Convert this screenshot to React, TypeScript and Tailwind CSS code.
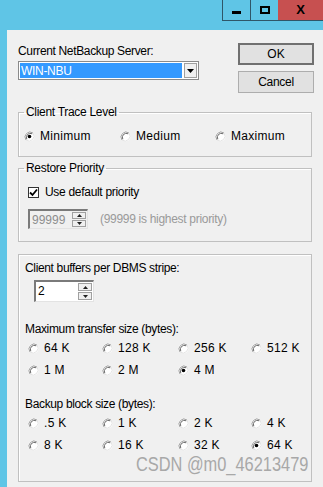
const font = { fontFamily: '"Liberation Sans", Arial, sans-serif' };

function Radio({ checked = false }: { checked?: boolean }) {
  return (
    <svg width="11" height="11" viewBox="0 0 11 11" className="shrink-0">
      <circle cx="5.5" cy="5.5" r="5" fill="#ffffff" />
      <path d="M9 2 A5 5 0 0 0 2 9" fill="none" stroke="#a0a0a0" strokeWidth="1" />
      <path d="M8.2 2.8 A4 4 0 0 0 2.8 8.2" fill="none" stroke="#696969" strokeWidth="1" />
      <path d="M2 9 A5 5 0 0 0 9 2" fill="none" stroke="#e3e3e3" strokeWidth="1" />
      {checked && <circle cx="5.5" cy="5.5" r="1.8" fill="#000000" />}
    </svg>
  );
}

function Opt({ label, checked }: { label: string; checked?: boolean }) {
  return (
    <div className="flex h-[22px] items-center gap-[5px] text-[12px] text-black">
      <Radio checked={checked} />
      <span className="tracking-[0.3px]">{label}</span>
    </div>
  );
}

function SpinButtons() {
  return (
    <div className="flex flex-col gap-[1px] py-[1px] pr-[1px]">
      <div className="flex h-[8px] w-[14px] items-center justify-center border border-[#a0a0a0] bg-[#f0f0f0]">
        <svg width="5" height="3" viewBox="0 0 5 3">
          <path d="M0 3 L2.5 0 L5 3 Z" fill="#202020" />
        </svg>
      </div>
      <div className="flex h-[8px] w-[14px] items-center justify-center border border-[#a0a0a0] bg-[#f0f0f0]">
        <svg width="5" height="3" viewBox="0 0 5 3">
          <path d="M0 0 L5 0 L2.5 3 Z" fill="#202020" />
        </svg>
      </div>
    </div>
  );
}

function Spin({ value, disabled }: { value: string; disabled?: boolean }) {
  return (
    <div
      className={`flex items-stretch border-t-2 border-l-2 border-b border-r border-t-[#7a7a7a] border-l-[#7a7a7a] border-b-[#e3e3e3] border-r-[#e3e3e3] ${
        disabled ? "h-[20px] w-[60px] bg-[#f0f0f0] text-[#8d8d8d]" : "h-[22px] w-[60px] bg-white text-black"
      }`}
    >
      <span className="flex-1 pl-[2px] text-[12px] leading-[18px]">{value}</span>
      <SpinButtons />
    </div>
  );
}

function Group({
  title,
  children,
  className = "",
  inner = "",
}: {
  title?: string;
  children: React.ReactNode;
  className?: string;
  inner?: string;
}) {
  return (
    <fieldset className={`border border-[#c0c0c0] shadow-[inset_1px_1px_0_#ffffff] ${className}`}>
      {title && (
        <legend className="ml-[5px] px-[2px] text-[12px] leading-[14px] tracking-[-0.3px] text-black">{title}</legend>
      )}
      <div className={inner}>{children}</div>
    </fieldset>
  );
}

const label = "text-[12px] leading-[14px] tracking-[-0.35px] text-black";

export default function App() {
  return (
    <div className="relative flex h-[487px] w-[323px] flex-col overflow-hidden bg-[#5fc5e6]" style={font}>
      {/* title bar */}
      <div className="flex h-[30px] shrink-0 justify-end">
        <div className="flex h-[21px] border-b border-l border-[#2f5668]">
          <div className="flex w-[28px] items-center justify-center border-r border-[#2f5668] bg-[#5fc5e6]">
            <div className="mt-[4px] h-[3px] w-[9px] bg-black" />
          </div>
          <div className="flex w-[27px] items-center justify-center bg-[#5fc5e6]">
            <div className="h-[8px] w-[10px] border-2 border-black" />
          </div>
          <div className="flex w-[45px] items-center justify-center bg-[#c75050] text-[13px] font-bold text-black">
            X
          </div>
        </div>
      </div>

      {/* client */}
      <div className="ml-[7px] flex flex-1 flex-col bg-[#f0f0f0] pl-[11px] pr-[11px]">
        <div className="flex justify-between">
          <div className="flex flex-col pt-[14px]">
            <span className={label}>Current NetBackup Server:</span>
            <div className="mt-[3px] flex h-[19px] w-[181px] items-center border border-[#8a8a8a] bg-white p-[1px]">
              <div className="flex h-full flex-1 items-center bg-[#3399ff] pl-[1px] text-[12px] tracking-[-0.3px] text-white">WIN-NBU</div>
              <div className="ml-[2px] flex h-full w-[13px] items-center justify-center border border-[#a0a0a0] bg-[#f0f0f0]">
                <svg width="7" height="4" viewBox="0 0 7 4">
                  <path d="M0 0 L7 0 L3.5 4 Z" fill="#000" />
                </svg>
              </div>
            </div>
          </div>
          <div className="mr-[-2px] flex flex-col gap-[6px] pt-[13px]">
            <div className="flex h-[22px] w-[76px] items-center justify-center border-2 border-[#707070] bg-[#e1e1e1] text-[12px] text-black">
              OK
            </div>
            <div className="flex h-[22px] w-[76px] items-center justify-center border border-[#adadad] bg-[#e1e1e1] text-[12px] tracking-[-0.3px] text-black">
              Cancel
            </div>
          </div>
        </div>

        <Group title="Client Trace Level" className="mt-[12px]" inner="pb-[9px] pl-[5px]">
          <div className="mt-[6px] grid grid-cols-[96px_95px_1fr]">
            <Opt label="Minimum" checked />
            <Opt label="Medium" />
            <Opt label="Maximum" />
          </div>
        </Group>

        <Group title="Restore Priority" className="mt-[4px]" inner="pb-[12px] pl-[9px]">
          <div className="mt-[10px] flex h-[14px] items-center gap-[6px] text-[12px] text-black">
            <div className="flex h-[11px] w-[11px] items-center justify-center border border-[#333] bg-white">
              <svg width="9" height="9" viewBox="0 0 9 9">
                <path d="M1 4.5 L3.5 7 L8 1.5" fill="none" stroke="#000" strokeWidth="1.8" />
              </svg>
            </div>
            <span className="tracking-[-0.3px]">Use default priority</span>
          </div>
          <div className="mt-[10px] flex items-center gap-[12px]">
            <Spin value="99999" disabled />
            <span className="text-[12px] tracking-[-0.3px] text-[#9a9a9a]">(99999 is highest priority)</span>
          </div>
        </Group>

        <Group className="mt-[12px]" inner="pb-[25px] pl-[6px] pt-[6px]">
          <div className={label}>Client buffers per DBMS stripe:</div>
          <div className="mt-[5px] ml-[9px]">
            <Spin value="2" />
          </div>
          <div className={`mt-[20px] ${label}`}>Maximum transfer size (bytes):</div>
          <div className="ml-[3px] mt-[1px] grid grid-cols-[74px_76px_73px_1fr]">
            <Opt label="64 K" />
            <Opt label="128 K" />
            <Opt label="256 K" />
            <Opt label="512 K" />
            <Opt label="1 M" />
            <Opt label="2 M" />
            <Opt label="4 M" checked />
          </div>
          <div className={`mt-[16px] ${label}`}>Backup block size (bytes):</div>
          <div className="ml-[3px] mt-[1px] grid grid-cols-[74px_76px_73px_1fr]">
            <Opt label=".5 K" />
            <Opt label="1 K" />
            <Opt label="2 K" />
            <Opt label="4 K" />
            <Opt label="8 K" />
            <Opt label="16 K" />
            <Opt label="32 K" />
            <Opt label="64 K" checked />
          </div>
        </Group>
      </div>

      {/* watermark */}
      <div className="absolute bottom-[12px] right-[15px] origin-right scale-x-[0.82] text-[20px] leading-[22px] text-[#a8a8a8]">
        CSDN @m0_46213479
      </div>
    </div>
  );
}
